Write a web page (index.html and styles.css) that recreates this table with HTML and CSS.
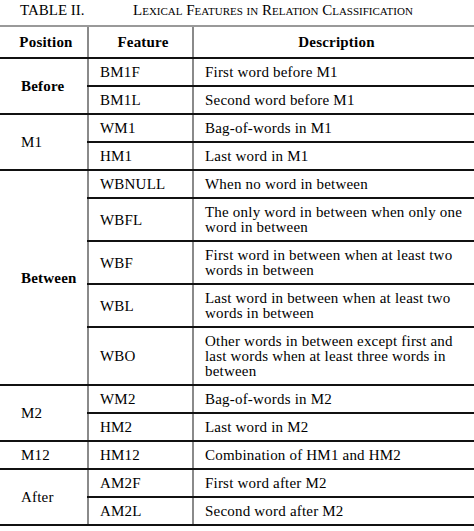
FILE: index.html
```html
<!DOCTYPE html>
<html>
<head>
<meta charset="utf-8">
<link rel="stylesheet" href="styles.css">
</head>
<body>
<div class="page">
  <div class="caption"><span class="num">TABLE II.</span><span class="name">Lexical Features in Relation Classification</span></div>
  <table class="tbl">
    <colgroup><col class="c1"><col class="c2"><col class="c3"></colgroup>
    <thead>
      <tr><th class="pos">Position</th><th>Feature</th><th>Description</th></tr>
    </thead>
    <tbody>
      <tr><td class="grp bold" rowspan="2">Before</td><td>BM1F</td><td>First word before M1</td></tr>
      <tr><td>BM1L</td><td>Second word before M1</td></tr>
      <tr class="gs"><td class="grp" rowspan="2">M1</td><td>WM1</td><td>Bag-of-words in M1</td></tr>
      <tr><td>HM1</td><td>Last word in M1</td></tr>
      <tr class="gs"><td class="grp bold" rowspan="5">Between</td><td>WBNULL</td><td>When no word in between</td></tr>
      <tr><td>WBFL</td><td>The only word in between when only one word in between</td></tr>
      <tr><td>WBF</td><td>First word in between when at least two words in between</td></tr>
      <tr><td>WBL</td><td>Last word in between when at least two words in between</td></tr>
      <tr><td>WBO</td><td>Other words in between except first and last words when at least three words in between</td></tr>
      <tr class="gs"><td class="grp" rowspan="2">M2</td><td>WM2</td><td>Bag-of-words in M2</td></tr>
      <tr><td>HM2</td><td>Last word in M2</td></tr>
      <tr class="gs"><td class="grp">M12</td><td>HM12</td><td>Combination of HM1 and HM2</td></tr>
      <tr class="gs"><td class="grp" rowspan="2">After</td><td>AM2F</td><td>First word after M2</td></tr>
      <tr><td>AM2L</td><td>Second word after M2</td></tr>
    </tbody>
  </table>
</div>
</body>
</html>
```
FILE: styles.css
```css
html, body {
  margin: 0;
  padding: 0;
  background: #fff;
}
.page {
  width: 474px;
  font-family: "Liberation Serif", Tinos, "Times New Roman", Times, "DejaVu Serif", serif;
  color: #000;
  font-size: 15px;
  letter-spacing: 0.2px;
}
.caption {
  height: 25px;
  padding-top: 2px;
  box-sizing: border-box;
  line-height: 16px;
  font-size: 15px;
  letter-spacing: 0;
}
.caption .num {
  display: inline-block;
  margin-left: 20px;
  width: 113px;
}
.caption .name {
  font-variant: small-caps;
}
.tbl {
  width: 474px;
  border-collapse: collapse;
  table-layout: fixed;
}
.c1 { width: 88px; }
.c2 { width: 105px; }
.c3 { width: 281px; }
.tbl th, .tbl td {
  padding: 6px 6px 5px 11px;
  line-height: 15px;
  text-align: left;
  vertical-align: middle;
  border-left: 2px solid #8a8a8a;
  border-bottom: 2px solid #111;
}
.tbl th:first-child, .tbl td.grp {
  border-left: none;
}
.tbl thead th {
  border-top: 2px solid #999;
  font-weight: bold;
  text-align: center;
  padding-top: 8px;
  padding-bottom: 7px;
}
.tbl td.grp {
  padding-left: 21px;
}
.tbl td.bold {
  font-weight: bold;
}
```
